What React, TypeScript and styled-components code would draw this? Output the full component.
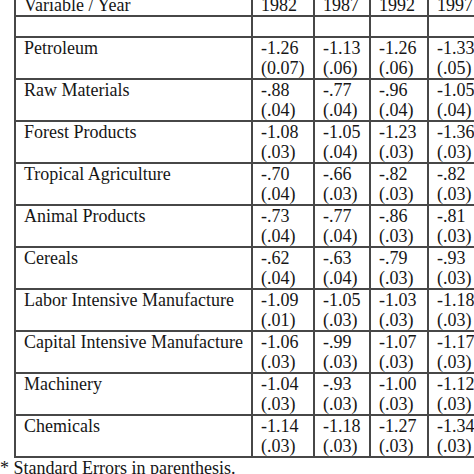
import React from "react";
import styled, { createGlobalStyle } from "styled-components";

const GlobalStyle = createGlobalStyle`
  html, body {
    margin: 0;
    padding: 0;
    background: #fff;
  }
`;

type Entry = { label: string; values: [string, string][] };

const years = ["1982", "1987", "1992", "1997"];

// estimate over standard error, per year
const rows: Entry[] = [
  { label: "Petroleum", values: [["-1.26", "(0.07)"], ["-1.13", "(.06)"], ["-1.26", "(.06)"], ["-1.33", "(.05)"]] },
  { label: "Raw Materials", values: [["-.88", "(.04)"], ["-.77", "(.04)"], ["-.96", "(.04)"], ["-1.05", "(.04)"]] },
  { label: "Forest Products", values: [["-1.08", "(.03)"], ["-1.05", "(.04)"], ["-1.23", "(.03)"], ["-1.36", "(.03)"]] },
  { label: "Tropical Agriculture", values: [["-.70", "(.04)"], ["-.66", "(.03)"], ["-.82", "(.03)"], ["-.82", "(.03)"]] },
  { label: "Animal Products", values: [["-.73", "(.04)"], ["-.77", "(.04)"], ["-.86", "(.03)"], ["-.81", "(.03)"]] },
  { label: "Cereals", values: [["-.62", "(.04)"], ["-.63", "(.04)"], ["-.79", "(.03)"], ["-.93", "(.03)"]] },
  { label: "Labor Intensive Manufacture", values: [["-1.09", "(.01)"], ["-1.05", "(.03)"], ["-1.03", "(.03)"], ["-1.18", "(.03)"]] },
  { label: "Capital Intensive Manufacture", values: [["-1.06", "(.03)"], ["-.99", "(.03)"], ["-1.07", "(.03)"], ["-1.17", "(.03)"]] },
  { label: "Machinery", values: [["-1.04", "(.03)"], ["-.93", "(.03)"], ["-1.00", "(.03)"], ["-1.12", "(.03)"]] },
  { label: "Chemicals", values: [["-1.14", "(.03)"], ["-1.18", "(.03)"], ["-1.27", "(.03)"], ["-1.34", "(.03)"]] },
];

const colWidths = [237, 62, 56, 58, 60];

const Page = styled.div`
  width: 474px;
  height: 474px;
  overflow: hidden;
  font-family: "Liberation Serif", "Times New Roman", serif;
  font-size: 18px;
  line-height: 20px;
  color: #161616;
`;

const Table = styled.table`
  border-collapse: collapse;
  table-layout: fixed;
  width: ${colWidths.reduce((a, b) => a + b, 0)}px;
  margin: -7px 0 0 14px;
`;

const Cell = styled.td<{ $empty?: boolean }>`
  border: 2px solid #474747;
  padding: 0 0 0 8px;
  text-align: left;
  vertical-align: top;
  white-space: nowrap;
  font-weight: normal;
  height: ${({ $empty }) => ($empty ? "19px" : "auto")};
`;

const HeadCell = styled(Cell).attrs({ as: "th" })``;

const Line = styled.div`
  height: 20px;
`;

const Footnote = styled.p`
  margin: 0;
  white-space: nowrap;
`;

export default function App() {
  return (
    <Page>
      <GlobalStyle />
      <Table>
        <colgroup>
          {colWidths.map((w, i) => (
            <col key={i} style={{ width: w }} />
          ))}
        </colgroup>
        <thead>
          <tr>
            <HeadCell>Variable / Year</HeadCell>
            {years.map((y) => (
              <HeadCell key={y}>{y}</HeadCell>
            ))}
          </tr>
        </thead>
        <tbody>
          <tr>
            {colWidths.map((_, i) => (
              <Cell key={i} $empty />
            ))}
          </tr>
          {rows.map((r) => (
            <tr key={r.label}>
              <Cell>
                <Line>{r.label}</Line>
                <Line />
              </Cell>
              {r.values.map(([est, se], i) => (
                <Cell key={i}>
                  <Line>{est}</Line>
                  <Line>{se}</Line>
                </Cell>
              ))}
            </tr>
          ))}
        </tbody>
      </Table>
      <Footnote>* Standard Errors in parenthesis.</Footnote>
    </Page>
  );
}
